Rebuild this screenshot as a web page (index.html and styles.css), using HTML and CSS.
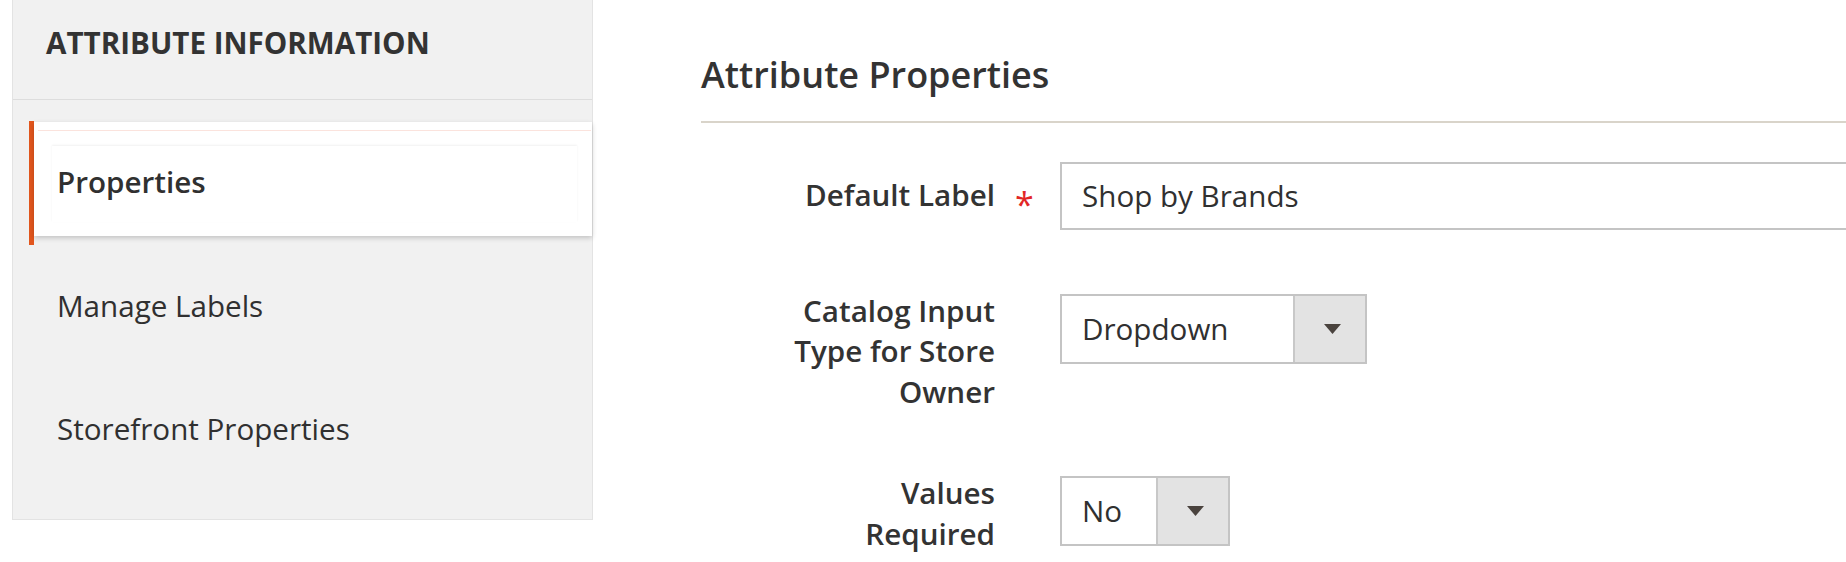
FILE: index.html
```html
<!DOCTYPE html>
<html lang="en">
<head>
<meta charset="utf-8">
<title>Attribute Properties</title>
<link rel="stylesheet" href="styles.css">
</head>
<body>
<div class="page">
  <aside class="nav">
    <div class="nav-title">ATTRIBUTE INFORMATION</div>
    <ul class="nav-list">
      <li class="nav-item active">
        <div class="nav-card">
          <div class="nav-card-line"></div>
          <div class="nav-card-link">Properties</div>
        </div>
      </li>
      <li class="nav-item"><div class="nav-link">Manage Labels</div></li>
      <li class="nav-item"><div class="nav-link">Storefront Properties</div></li>
    </ul>
  </aside>
  <main class="content">
    <h2 class="legend">Attribute Properties</h2>
    <div class="field">
      <label class="field-label">Default Label</label>
      <span class="required">*</span>
      <div class="control"><div class="input">Shop by Brands</div></div>
    </div>
    <div class="field">
      <label class="field-label multi">Catalog Input Type for Store Owner</label>
      <span class="required"></span>
      <div class="control">
        <div class="select select-wide">
          <div class="select-value">Dropdown</div>
          <div class="select-btn"><svg class="arrow" width="17" height="10" viewBox="0 0 17 10"><path d="M0 0H17L8.5 10Z"/></svg></div>
        </div>
      </div>
    </div>
    <div class="field">
      <label class="field-label multi">Values Required</label>
      <span class="required"></span>
      <div class="control">
        <div class="select select-narrow">
          <div class="select-value">No</div>
          <div class="select-btn"><svg class="arrow" width="17" height="10" viewBox="0 0 17 10"><path d="M0 0H17L8.5 10Z"/></svg></div>
        </div>
      </div>
    </div>
  </main>
</div>
</body>
</html>
```

FILE: styles.css
```css
html, body {
  margin: 0;
  padding: 0;
  overflow: hidden;
  background: #ffffff;
}
body {
  width: 1846px;
  height: 562px;
  font-family: "Open Sans", "Noto Sans", sans-serif;
  color: #303030;
}
.page {
  display: flex;
  align-items: flex-start;
}

/* Sidebar */
.nav {
  flex: none;
  margin-left: 12px;
  width: 581px;
  box-sizing: border-box;
  background: #f1f1f1;
  border: 1px solid #e3e3e3;
  border-top: 0;
}
.nav-title {
  padding: 22.5px 0 36.5px 33px;
  font-size: 29.6px;
  line-height: 40px;
  font-weight: 700;
  color: #333333;
  border-bottom: 1px solid #dddddd;
}
.nav-list {
  list-style: none;
  margin: 0;
  padding: 20.7px 0 28px 0;
}
.nav-item {
  margin-left: 16px;
  border-left: 5px solid transparent;
}
.nav-link {
  padding: 40.7px 0 42.3px 23px;
  font-size: 29.6px;
  line-height: 40px;
  color: #303030;
}
.nav-item.active {
  border-left-color: #e2561d;
  padding: 1.6px 0 9px 0;
}
.nav-card {
  background: #ffffff;
  padding: 8px 0 14px 0;
  box-shadow: 0 2px 5px rgba(0, 0, 0, 0.2);
}
.nav-card-line {
  height: 1px;
  margin: 0 1px 0 4px;
  background: #fbe3dd;
}
.nav-card-link {
  margin: 15px 15px 0 18px;
  padding: 16px 0 20px 5px;
  font-size: 29.6px;
  line-height: 40px;
  font-weight: 600;
  color: #303030;
  box-shadow: 0 -1px 2px rgba(0, 0, 0, 0.06);
}

/* Main */
.content {
  flex: none;
  width: 1200px;
  margin-left: 108px;
  padding-top: 52.7px;
}
.legend {
  margin: 0 0 39.6px 0;
  padding-bottom: 25px;
  font-size: 36px;
  line-height: 43px;
  font-weight: 600;
  color: #333333;
  border-bottom: 2px solid #d9d4ca;
}
.field {
  display: grid;
  grid-template-columns: 215px 65px 1fr;
  align-items: start;
  padding-left: 79px;
  margin-bottom: 63.3px;
}
.field:last-child {
  margin-bottom: 0;
}
.field-label {
  text-align: right;
  font-size: 29.6px;
  line-height: 40px;
  font-weight: 600;
  color: #333333;
  padding-top: 12.8px;
}
.field-label.multi {
  padding-top: 0;
  margin-top: -2.6px;
  line-height: 40.5px;
}
.required {
  padding: 22px 0 0 20px;
  font-size: 34px;
  line-height: 40px;
  color: #e22626;
}
.input {
  height: 68px;
  box-sizing: border-box;
  border: 2px solid #c4c4c4;
  padding: 0 20px 2px 20px;
  display: flex;
  align-items: center;
  font-size: 29.6px;
  color: #303030;
  background: #ffffff;
}
.select {
  display: flex;
  height: 70px;
  box-sizing: border-box;
  border: 2px solid #c4c4c4;
  background: #ffffff;
}
.select-wide { width: 307px; }
.select-narrow { width: 170px; }
.select-value {
  flex: 1;
  padding: 0 0 1px 20px;
  display: flex;
  align-items: center;
  font-size: 29.6px;
  color: #303030;
}
.select-btn {
  flex: none;
  width: 72px;
  box-sizing: border-box;
  border-left: 2px solid #c8c8c8;
  background: #e3e3e3;
  display: flex;
  align-items: center;
  justify-content: center;
  padding-left: 4px;
}
.arrow {
  display: block;
  fill: #4a433e;
}
```
